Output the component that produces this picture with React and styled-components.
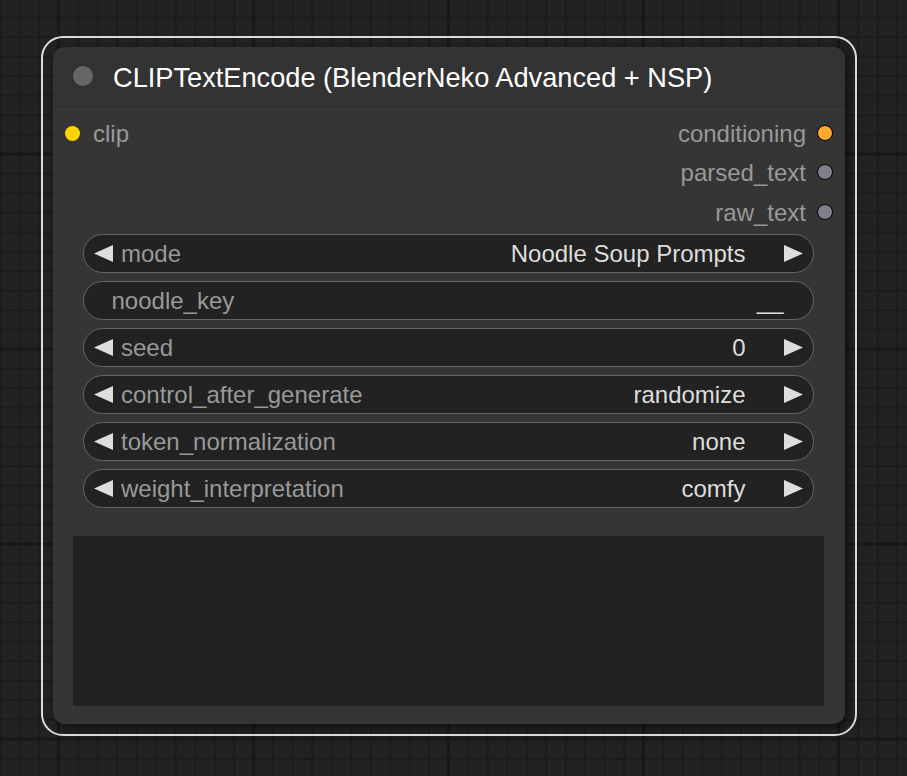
import React from "react";
import styled, { createGlobalStyle } from "styled-components";

const Global = createGlobalStyle`
  html, body {
    margin: 0;
    padding: 0;
    width: 100%;
    min-height: 100vh;
    background-color: #222222;
    background-image:
      linear-gradient(to right, #171717 0 3px, transparent 3px),
      linear-gradient(to bottom, #171717 0 3px, transparent 3px),
      linear-gradient(to right, #1b1b1b 0 1.5px, transparent 1.5px),
      linear-gradient(to bottom, #1b1b1b 0 1.5px, transparent 1.5px);
    background-size: 195px 195px, 195px 195px, 19.5px 19.5px, 19.5px 19.5px;
    background-position: 57px 0, 0 152.5px, -0.75px 0, 0 16.75px;
    font-family: "Liberation Sans", Arial, sans-serif;
    overflow: hidden;
  }
`;

const Canvas = styled.div`
  width: 907px;
  height: 776px;
  box-sizing: border-box;
  padding: 36px 0 0 41px;
`;

const Selection = styled.div`
  width: 816px;
  height: 700px;
  box-sizing: border-box;
  border: 2px solid #dcdcdc;
  border-radius: 22px;
  padding: 9px 10px 10px 10px;
`;

const Node = styled.div`
  width: 792px;
  height: 677px;
  box-sizing: border-box;
  background: #353535;
  border-radius: 12px;
  box-shadow: 3px 3px 8px rgba(0, 0, 0, 0.55);
  display: flex;
  flex-direction: column;
  overflow: hidden;
`;

const TitleBar = styled.div`
  height: 60px;
  box-sizing: border-box;
  background: #333333;
  border-bottom: 1px solid #2b2b2b;
  display: flex;
  align-items: center;
  padding-left: 20px;
  gap: 20px;
`;

const TitleDot = styled.div`
  width: 20px;
  height: 20px;
  border-radius: 50%;
  background: #666666;
  margin-top: -1px;
`;

const Title = styled.div`
  color: #ffffff;
  font-size: 27.2px;
  margin-top: 2px;
  white-space: nowrap;
`;

const Slots = styled.div`
  display: grid;
  grid-template-columns: 1fr 1fr;
  grid-auto-rows: 39.4px;
  padding: 6.4px 12px 0 12px;
`;

const Slot = styled.div`
  display: flex;
  align-items: center;
  justify-content: ${(p) => (p.$out ? "flex-end" : "flex-start")};
  grid-column: ${(p) => (p.$out ? 2 : 1)};
  gap: ${(p) => (p.$out ? "11px" : "13px")};
`;

const SlotLabel = styled.span`
  color: #999999;
  font-size: 24px;
  white-space: nowrap;
  margin-top: 2px;
`;

const SlotDot = styled.span`
  width: ${(p) => (p.$out ? "14px" : "15px")};
  height: ${(p) => (p.$out ? "14px" : "15px")};
  border-radius: 50%;
  background: ${(p) => p.$color};
  border: ${(p) => (p.$out ? "1.5px solid #000" : "none")};
  flex: none;
`;

const Widgets = styled.div`
  display: flex;
  flex-direction: column;
  gap: 8px;
  margin: 2.4px 31px 0 30px;
`;

const Widget = styled.div`
  height: 39px;
  box-sizing: border-box;
  background: #222222;
  border: 1.5px solid #666666;
  border-radius: 20px;
  display: flex;
  align-items: center;
  padding: ${(p) => (p.$text ? "0 29.5px 0 27.5px" : "0 10.5px 0 10px")};
`;

const WLabel = styled.span`
  color: #999999;
  font-size: 24px;
  flex: 1;
  white-space: nowrap;
  margin-left: ${(p) => (p.$text ? "0" : "8px")};
  margin-top: 2px;
`;

const WValue = styled.span`
  color: #dddddd;
  font-size: 24px;
  white-space: nowrap;
  margin-right: ${(p) => (p.$text ? "0" : "38px")};
  margin-top: 2px;
`;

const ArrowSvg = styled.svg`
  width: 19px;
  height: 17px;
  flex: none;
  display: block;
  margin-top: 1px;
`;

const TextArea = styled.div`
  margin: 28px 21px 0 20px;
  height: 170px;
  background: #222222;
`;

const Arrow = ({ dir }) => (
  <ArrowSvg viewBox="0 0 19 17">
    {dir === "left" ? (
      <polygon points="0,8.5 19,0 19,17" fill="#dddddd" />
    ) : (
      <polygon points="19,8.5 0,0 0,17" fill="#dddddd" />
    )}
  </ArrowSvg>
);

const combos = [
  { label: "mode", value: "Noodle Soup Prompts" },
  { label: "noodle_key", value: "__", text: true },
  { label: "seed", value: "0" },
  { label: "control_after_generate", value: "randomize" },
  { label: "token_normalization", value: "none" },
  { label: "weight_interpretation", value: "comfy" },
];

export default function App() {
  return (
    <>
      <Global />
      <Canvas>
        <Selection>
          <Node>
            <TitleBar>
              <TitleDot />
              <Title>CLIPTextEncode (BlenderNeko Advanced + NSP)</Title>
            </TitleBar>
            <Slots>
              <Slot>
                <SlotDot $color="#ffd500" />
                <SlotLabel>clip</SlotLabel>
              </Slot>
              <Slot $out>
                <SlotLabel>conditioning</SlotLabel>
                <SlotDot $out $color="#ffa931" />
              </Slot>
              <Slot $out>
                <SlotLabel>parsed_text</SlotLabel>
                <SlotDot $out $color="#7f7f8c" />
              </Slot>
              <Slot $out>
                <SlotLabel>raw_text</SlotLabel>
                <SlotDot $out $color="#7f7f8c" />
              </Slot>
            </Slots>
            <Widgets>
              {combos.map((w) => (
                <Widget key={w.label} $text={w.text}>
                  {!w.text && <Arrow dir="left" />}
                  <WLabel $text={w.text}>{w.label}</WLabel>
                  <WValue $text={w.text}>{w.value}</WValue>
                  {!w.text && <Arrow dir="right" />}
                </Widget>
              ))}
            </Widgets>
            <TextArea />
          </Node>
        </Selection>
      </Canvas>
    </>
  );
}
